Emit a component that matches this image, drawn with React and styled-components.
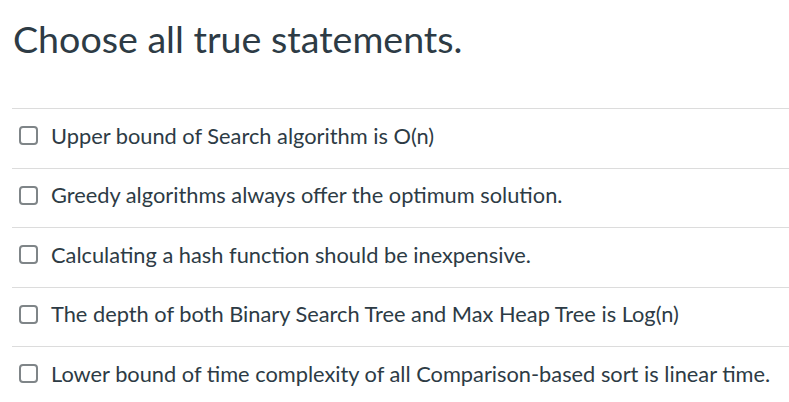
import React from "react";
import styled, { createGlobalStyle } from "styled-components";

const Global = createGlobalStyle`
  html, body { margin: 0; padding: 0; background: #fff; }
  body { font-family: Lato, "Noto Sans", sans-serif; color: #2d3b45; }
`;

const Page = styled.div`
  padding: 0 0 0 12px;
`;

const Title = styled.h1`
  margin: 0;
  padding: 16px 0 0 1px;
  font-size: 37.6px;
  font-weight: 400;
  line-height: 45px;
  color: #2d3b45;
  height: 108px;
  box-sizing: border-box;
`;

const List = styled.div`
  display: flex;
  flex-direction: column;
`;

const Row = styled.label`
  display: flex;
  align-items: center;
  gap: 13px;
  height: 59.5px;
  border-top: 1px solid #dcdcdc;
  padding: 0 0 5px 7px;
  box-sizing: border-box;
  font-size: 21.8px;
  cursor: pointer;
`;

const Box = styled.span`
  width: 15px;
  height: 15px;
  border: 2px solid #7f8588;
  border-radius: 4px;
  flex: none;
`;

const Text = styled.span`
  color: #2d3b45;
  line-height: 26px;
`;

const items = [
  "Upper bound of Search algorithm is O(n)",
  "Greedy algorithms always offer the optimum solution.",
  "Calculating a hash function should be inexpensive.",
  "The depth of both Binary Search Tree and Max Heap Tree is Log(n)",
  "Lower bound of time complexity of all Comparison-based sort is linear time.",
];

export default function App() {
  return (
    <Page>
      <Global />
      <Title>Choose all true statements.</Title>
      <List>
        {items.map((t) => (
          <Row key={t}>
            <Box />
            <Text>{t}</Text>
          </Row>
        ))}
      </List>
    </Page>
  );
}
